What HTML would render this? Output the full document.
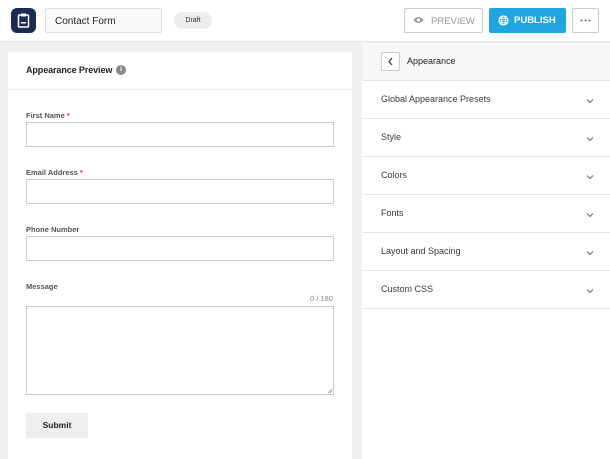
<!DOCTYPE html>
<html><head><style>
*{box-sizing:border-box;margin:0;padding:0}
body{width:610px;height:459px;overflow:hidden;background:#f0f0f0;font-family:"Liberation Sans",sans-serif;position:relative;color:#333}
.abs{position:absolute}
.top{left:0;top:0;width:610px;height:42px;background:#fff;border-bottom:1px solid #e4e4e4}
.lbl{font-size:7.5px;font-weight:bold;color:#555;left:26px}
.lbl b{color:#d33}
.inp{left:26px;width:308px;height:25px;border:1px solid #ccc;background:#fff}
.row{left:362px;width:248px;height:38px;border-bottom:1px solid #e6e6e6;font-size:9px;color:#3a3a3a;padding:13px 0 0 19px;background:#fff}
.row svg{position:absolute;right:16px;top:17px}
</style></head><body>
<div class="abs top"></div>
<div class="abs" style="left:11px;top:8px;width:25px;height:25px;background:#1e2a56;border-radius:6px"></div>
<svg class="abs" style="left:17px;top:13px" width="13" height="15" viewBox="0 0 13 15"><rect x="1.5" y="2" width="10" height="12" rx="1" fill="none" stroke="#fff" stroke-width="1.5"/><rect x="4" y="0.5" width="5" height="3" fill="#fff"/><rect x="4" y="9" width="5" height="1.5" fill="#fff"/></svg>
<div class="abs" style="left:45px;top:8px;width:117px;height:25px;border:1px solid #ddd;border-radius:2px;background:#fafafa;font-size:10px;padding:7px 0 0 9px;color:#222">Contact Form</div>
<div class="abs" style="left:174px;top:12px;width:38px;height:17px;border-radius:9px;background:#ececec;font-size:7px;text-align:center;line-height:17px;color:#333">Draft</div>
<div class="abs" style="left:404px;top:8px;width:79px;height:25px;border:1px solid #ccc;border-radius:2px;font-size:9.5px;color:#999;padding:7px 0 0 26px">PREVIEW</div>
<svg class="abs" style="left:413px;top:16px" width="11" height="8" viewBox="0 0 11 8"><path d="M0.5 4Q5.5-2 10.5 4Q5.5 10 0.5 4Z" fill="#999"/><circle cx="5.5" cy="4" r="1.6" fill="#fff"/></svg>
<div class="abs" style="left:489px;top:8px;width:77px;height:25px;background:#1fa6e0;border-radius:2px;font-size:9.5px;color:#fff;font-weight:bold;padding:7px 0 0 25px">PUBLISH</div>
<svg class="abs" style="left:498px;top:15px" width="11" height="11" viewBox="0 0 11 11"><circle cx="5.5" cy="5.5" r="4.5" fill="none" stroke="#fff" stroke-width="1.2"/><ellipse cx="5.5" cy="5.5" rx="2" ry="4.5" fill="none" stroke="#fff" stroke-width="1"/><path d="M1 5.5H10M1.8 3.3H9.2M1.8 7.7H9.2" stroke="#fff" stroke-width=".8"/></svg>
<div class="abs" style="left:572px;top:8px;width:27px;height:25px;border:1px solid #ccc;border-radius:2px"></div>
<svg class="abs" style="left:580px;top:19px" width="11" height="3" viewBox="0 0 11 3"><circle cx="1.5" cy="1.5" r="1" fill="#666"/><circle cx="5.5" cy="1.5" r="1" fill="#666"/><circle cx="9.5" cy="1.5" r="1" fill="#666"/></svg>

<div class="abs" style="left:8px;top:52px;width:344px;height:407px;background:#fff"></div>
<div class="abs" style="left:8px;top:89px;width:344px;height:1px;background:#eee"></div>
<div class="abs" style="left:26px;top:65px;font-size:9px;font-weight:bold;color:#222;letter-spacing:-0.1px">Appearance Preview</div>
<div class="abs" style="left:116px;top:65px;width:10px;height:10px;border-radius:50%;background:#888;color:#fff;font-size:7px;font-weight:bold;text-align:center;line-height:10px">i</div>

<div class="abs lbl" style="top:111px">First Name <b>*</b></div>
<div class="abs inp" style="top:122px"></div>
<div class="abs lbl" style="top:168px">Email Address <b>*</b></div>
<div class="abs inp" style="top:179px"></div>
<div class="abs lbl" style="top:225px">Phone Number</div>
<div class="abs inp" style="top:236px"></div>
<div class="abs lbl" style="top:282px">Message</div>
<div class="abs" style="left:310px;top:294px;font-size:7.5px;color:#888">0 / 180</div>
<div class="abs inp" style="top:306px;height:89px"></div>
<svg class="abs" style="left:327px;top:388px" width="6" height="6" viewBox="0 0 6 6"><path d="M1 5L5 1M3 5L5 3" stroke="#999" stroke-width=".8"/></svg>
<div class="abs" style="left:26px;top:413px;width:62px;height:25px;background:#efefef;font-size:8.5px;font-weight:bold;color:#222;text-align:center;line-height:25px">Submit</div>

<div class="abs" style="left:362px;top:43px;width:248px;height:416px;background:#fff"></div>
<div class="abs" style="left:362px;top:43px;width:248px;height:38px;background:#f7f7f7;border-bottom:1px solid #e6e6e6"></div>
<div class="abs" style="left:381px;top:52px;width:19px;height:19px;border:1px solid #ccc;border-radius:2px;background:#fff"></div>
<svg class="abs" style="left:387px;top:57px" width="7" height="9" viewBox="0 0 7 9"><path d="M5 1L2 4.5L5 8" fill="none" stroke="#555" stroke-width="1.4"/></svg>
<div class="abs" style="left:407px;top:56px;font-size:9px;color:#222">Appearance</div>
<div class="abs row" style="top:81px">Global Appearance Presets<svg width="8" height="6" viewBox="0 0 8 6"><path d="M1 1.5L4 4.5L7 1.5" fill="none" stroke="#777" stroke-width="1.2"/></svg></div>
<div class="abs row" style="top:119px">Style<svg width="8" height="6" viewBox="0 0 8 6"><path d="M1 1.5L4 4.5L7 1.5" fill="none" stroke="#777" stroke-width="1.2"/></svg></div>
<div class="abs row" style="top:157px">Colors<svg width="8" height="6" viewBox="0 0 8 6"><path d="M1 1.5L4 4.5L7 1.5" fill="none" stroke="#777" stroke-width="1.2"/></svg></div>
<div class="abs row" style="top:195px">Fonts<svg width="8" height="6" viewBox="0 0 8 6"><path d="M1 1.5L4 4.5L7 1.5" fill="none" stroke="#777" stroke-width="1.2"/></svg></div>
<div class="abs row" style="top:233px">Layout and Spacing<svg width="8" height="6" viewBox="0 0 8 6"><path d="M1 1.5L4 4.5L7 1.5" fill="none" stroke="#777" stroke-width="1.2"/></svg></div>
<div class="abs row" style="top:271px">Custom CSS<svg width="8" height="6" viewBox="0 0 8 6"><path d="M1 1.5L4 4.5L7 1.5" fill="none" stroke="#777" stroke-width="1.2"/></svg></div>
</body></html>
